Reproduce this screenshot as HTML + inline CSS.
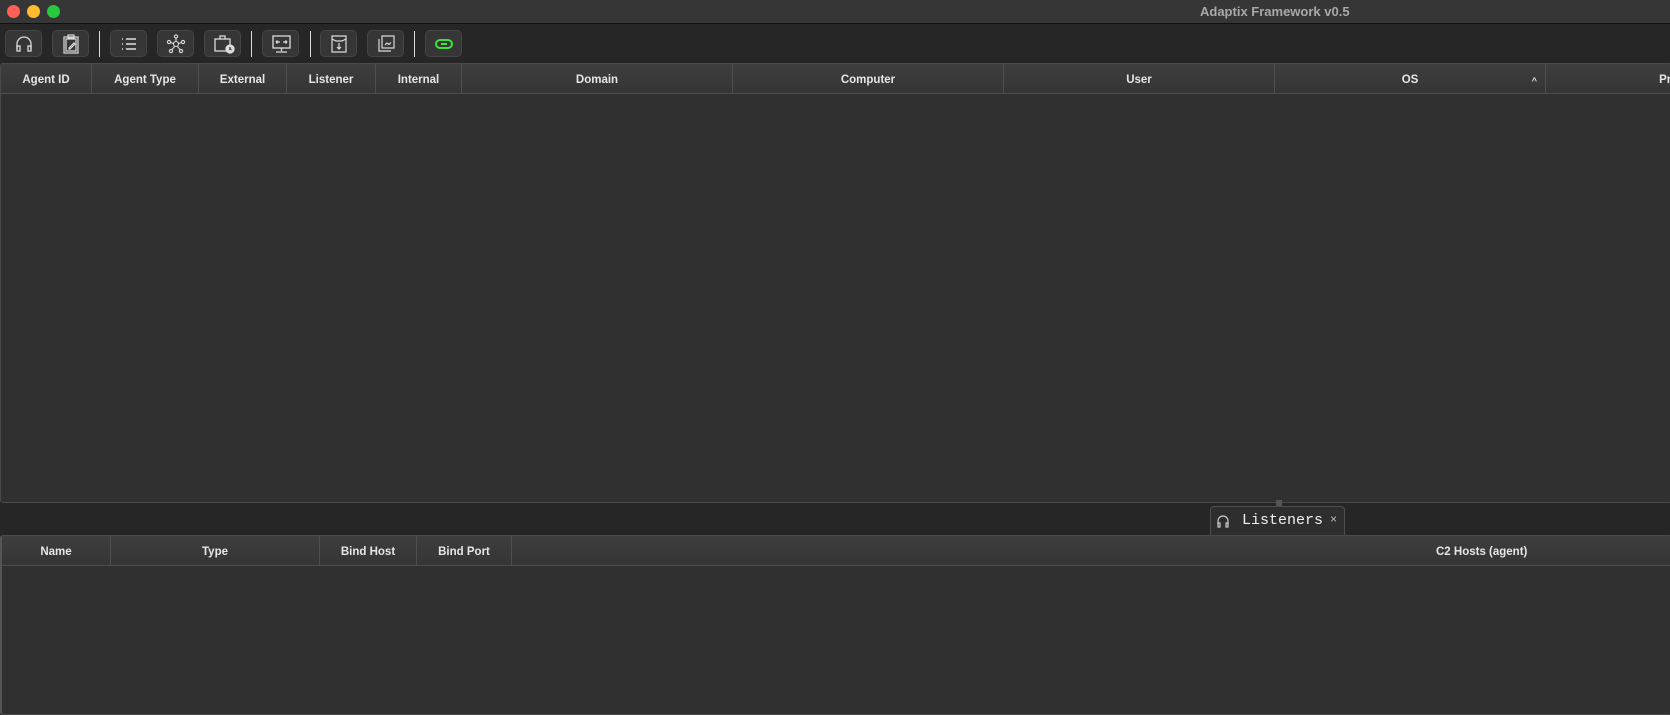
<!DOCTYPE html><html><head><style>
*{margin:0;padding:0;box-sizing:border-box}
body{width:1670px;height:709px;background:#262626;font-family:"Liberation Sans",sans-serif;position:relative;overflow:hidden}
.abs{position:absolute}
.title{left:0;top:0;width:1670px;height:24px;background:#363636;border-bottom:1px solid #111}
.dot{width:13px;height:13px;border-radius:50%;top:5px}
.btn{top:30px;width:37px;height:27px;background:#363636;border:1px solid #454545;border-radius:5px}
.btn svg{position:absolute;left:8px;top:3px}
.sep{top:31px;width:1px;height:26px;background:#d8d8d8}
.panel{background:#303030;border:1px solid #4a4a4a;border-radius:3px}
.hdr{background:linear-gradient(#3e3e3e,#353535);border-bottom:1px solid #4e4e4e;height:30px}
.c{position:absolute;top:0;height:29px;border-right:1px solid #4f4f4f;color:#e6e6e6;font-weight:bold;font-size:11.5px;line-height:32px;text-align:center}
</style></head><body>
<div class="abs title"></div>
<div class="abs dot" style="left:7px;background:#fe5f57"></div>
<div class="abs dot" style="left:27px;background:#febc2e"></div>
<div class="abs dot" style="left:47px;background:#28c840"></div>
<div class="abs" style="left:1200px;top:4px;color:#a9a9a9;font-weight:bold;font-size:13px">Adaptix Framework v0.5</div>

<div class="abs btn" style="left:5px"><svg width="20" height="20" viewBox="0 0 20 20" fill="none" stroke="#ddd" stroke-width="1.3"><path d="M3 15V10a7 7 0 0 1 14 0v5"/><rect x="3" y="12" width="3" height="5"/><rect x="14" y="12" width="3" height="5"/></svg></div>
<div class="abs btn" style="left:52px"><svg width="20" height="20" viewBox="0 0 20 20" fill="none" stroke="#ddd" stroke-width="1.2"><rect x="3" y="3" width="14" height="16"/><rect x="5" y="5" width="10" height="12"/><rect x="7" y="1" width="6" height="3"/><path d="M8 14l5-5 1 1-5 5H8z"/></svg></div>
<div class="abs sep" style="left:99px"></div>
<div class="abs btn" style="left:110px"><svg width="20" height="20" viewBox="0 0 20 20" fill="none" stroke="#ddd" stroke-width="1.6"><path d="M3 5h1M3 10h1M3 15h1M7 5h10M7 10h10M7 15h10"/></svg></div>
<div class="abs btn" style="left:157px"><svg width="20" height="20" viewBox="0 0 20 20" fill="none" stroke="#ddd" stroke-width="1.1"><circle cx="10" cy="10" r="2.5"/><circle cx="10" cy="2.5" r="1.6"/><circle cx="3" cy="8" r="1.6"/><circle cx="17" cy="8" r="1.6"/><circle cx="5" cy="17" r="1.6"/><circle cx="15" cy="17" r="1.6"/><path d="M10 4v3.5M4.5 8.5l3 1M15.5 8.5l-3 1M6 15.8l2.5-3.5M14 15.8l-2.5-3.5"/></svg></div>
<div class="abs btn" style="left:204px"><svg width="22" height="20" viewBox="0 0 22 20" fill="none" stroke="#ddd" stroke-width="1.3"><rect x="2" y="5" width="15" height="12"/><path d="M7 5V2h5v3"/><circle cx="17" cy="15" r="4" fill="#ddd"/><path d="M17 13v2.5h1.5" stroke="#333"/></svg></div>
<div class="abs sep" style="left:251px"></div>
<div class="abs btn" style="left:262px"><svg width="22" height="20" viewBox="0 0 22 20" fill="none" stroke="#ddd" stroke-width="1.3"><rect x="2" y="2" width="17" height="12"/><path d="M10.5 14v3M5 18h11M5 8h4M12 8h4" /><path d="M5 8l1.5-1.5M5 8l1.5 1.5M16 8l-1.5-1.5M16 8l-1.5 1.5"/></svg></div>
<div class="abs sep" style="left:310px"></div>
<div class="abs btn" style="left:320px"><svg width="20" height="20" viewBox="0 0 20 20" fill="none" stroke="#ddd" stroke-width="1.2"><path d="M3 2h14v16H3zM3 5l4 2h6l4-2M10 9v6M8 13l2 2 2-2"/></svg></div>
<div class="abs btn" style="left:367px"><svg width="20" height="20" viewBox="0 0 20 20" fill="none" stroke="#ddd" stroke-width="1.2"><rect x="6" y="2" width="12" height="12"/><path d="M3 5v12h12"/><path d="M9 11l2-2 2 1.5 2-2" /></svg></div>
<div class="abs sep" style="left:414px"></div>
<div class="abs btn" style="left:425px"><svg width="20" height="20" viewBox="0 0 20 20" fill="none" stroke="#3ee03a" stroke-width="2"><rect x="2" y="6" width="16" height="8" rx="4"/><path d="M7 10h6"/></svg></div>

<div class="abs panel" style="left:0;top:63px;width:1672px;height:440px">
<div class="hdr" style="position:relative">
<div class="c" style="left:0;width:91px">Agent ID</div>
<div class="c" style="left:91px;width:107px">Agent Type</div>
<div class="c" style="left:198px;width:88px">External</div>
<div class="c" style="left:286px;width:89px">Listener</div>
<div class="c" style="left:375px;width:86px">Internal</div>
<div class="c" style="left:461px;width:271px">Domain</div>
<div class="c" style="left:732px;width:271px">Computer</div>
<div class="c" style="left:1003px;width:271px">User</div>
<div class="c" style="left:1274px;width:271px">OS<span style="position:absolute;right:8px;top:1px;font-size:9px">^</span></div>
<div class="c" style="left:1545px;width:271px;border:none">Process</div>
</div></div>

<div class="abs" style="left:1276px;top:500px;width:6px;height:6px;background:#555"></div>
<div class="abs" style="left:1210px;top:506px;width:135px;height:30px;background:#2e2e2e;border:1px solid #4e4e4e;border-bottom:none;border-radius:4px 4px 0 0;color:#f0f0f0;font-family:'Liberation Mono',monospace;font-size:15px;line-height:27px">
<svg class="abs" style="left:5px;top:7px" width="14" height="14" viewBox="0 0 14 14" fill="none" stroke="#ccc" stroke-width="1.2"><path d="M2 11V7a5 5 0 0 1 10 0v4"/><rect x="2" y="9" width="2" height="4"/><rect x="10" y="9" width="2" height="4"/></svg>
<span class="abs" style="left:31px">Listeners</span><span class="abs" style="left:119px;font-size:12px;color:#bbb">×</span></div>

<div class="abs panel" style="left:0;top:535px;width:1672px;height:180px;border-left:2px solid #555">
<div class="hdr" style="position:relative">
<div class="c" style="left:0;width:109px">Name</div>
<div class="c" style="left:109px;width:209px">Type</div>
<div class="c" style="left:318px;width:97px">Bind Host</div>
<div class="c" style="left:415px;width:95px">Bind Port</div>
<div class="c" style="left:510px;width:1160px;border:none"><span style="position:absolute;left:924px">C2 Hosts (agent)</span></div>
</div></div>
</body></html>
